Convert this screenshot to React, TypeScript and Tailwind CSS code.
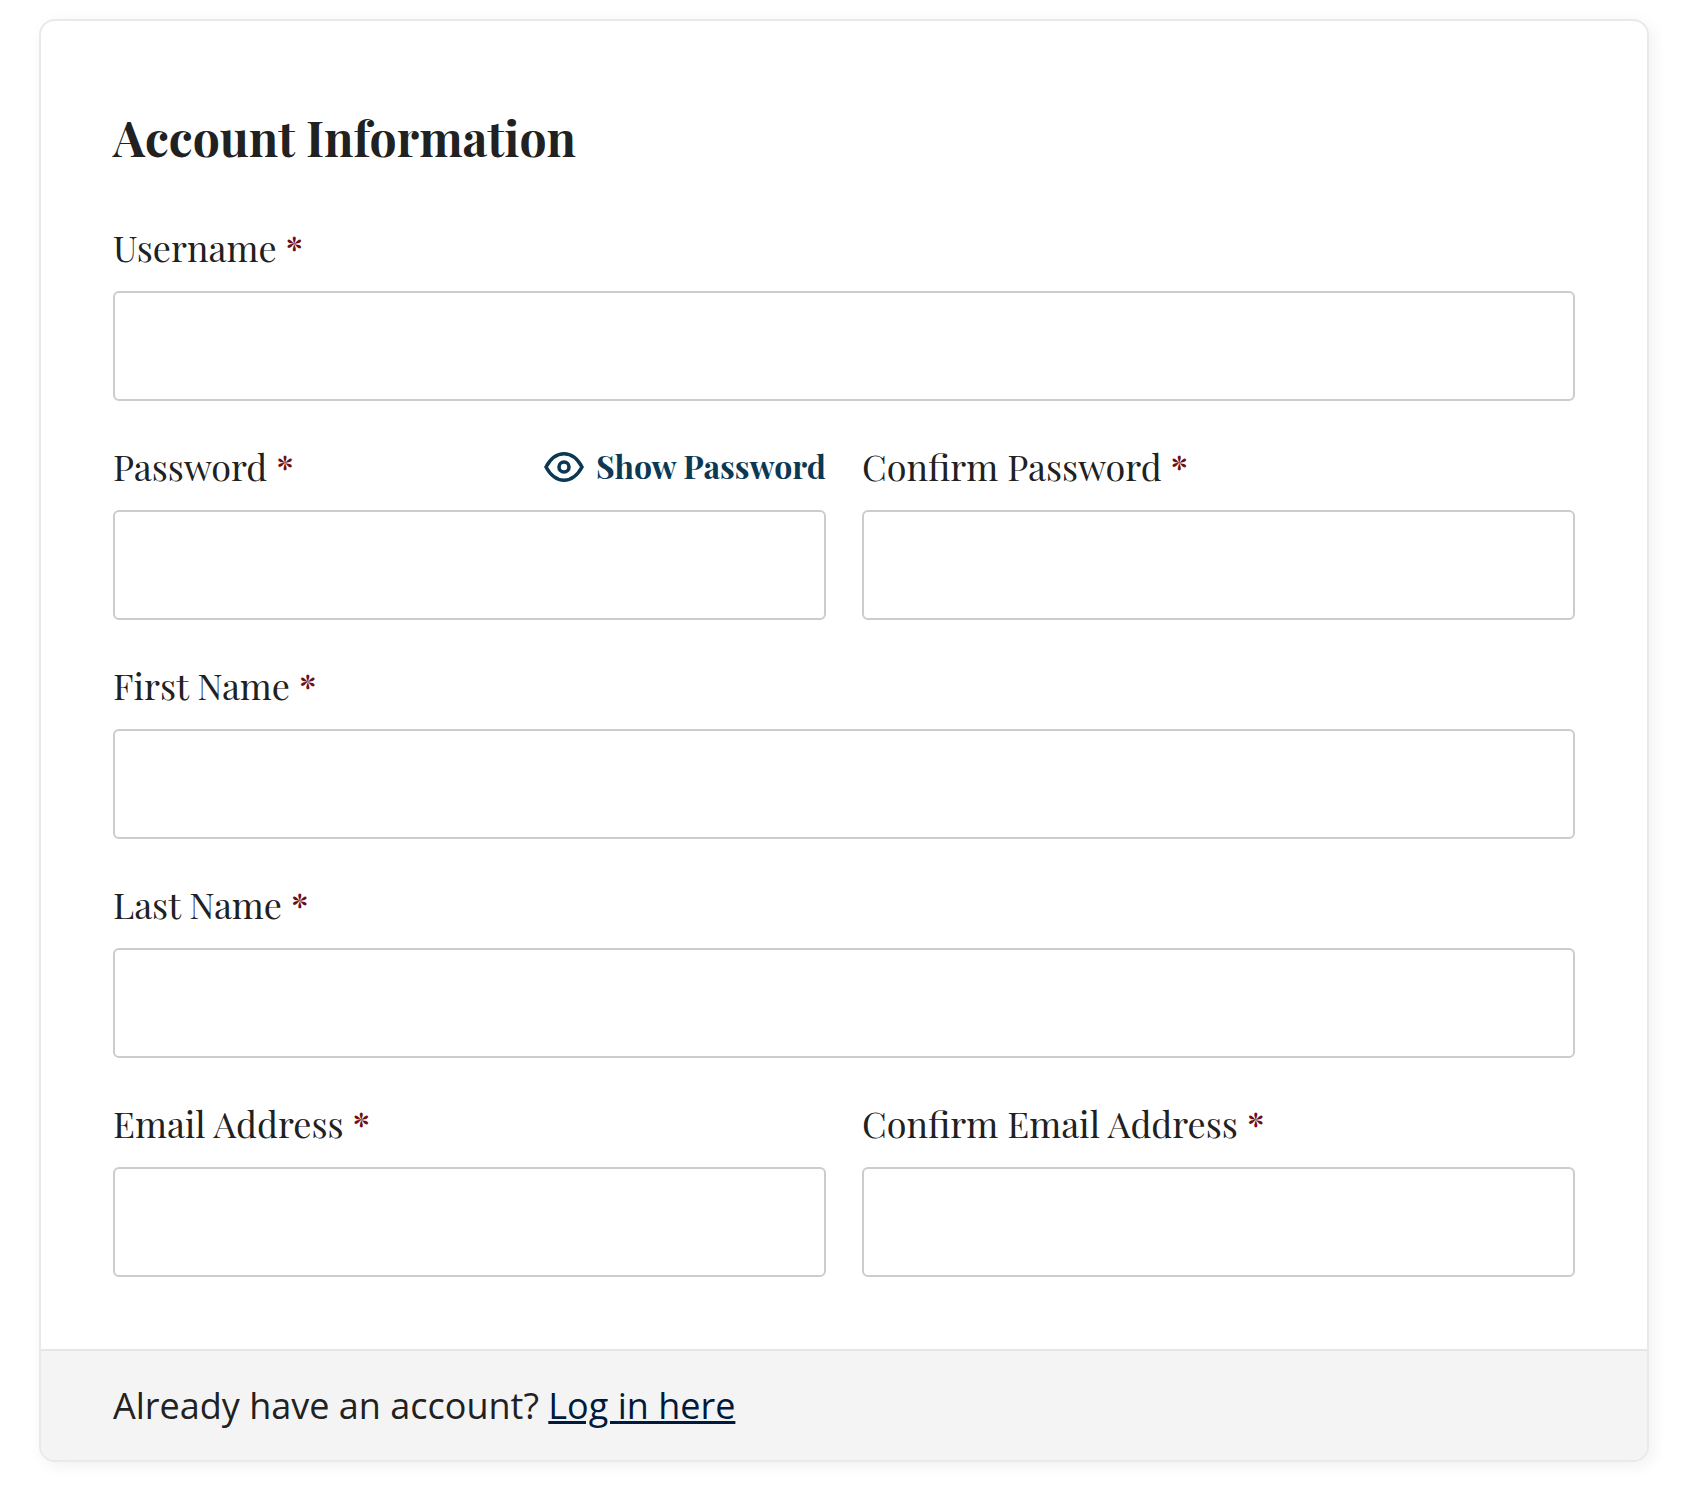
import { useState } from 'react';
import type { ReactNode } from 'react';

interface FieldProps {
  id: string;
  label: string;
  type?: string;
  action?: ReactNode;
}

function EyeIcon() {
  return (
    <svg
      className="h-9 w-10 shrink-0"
      viewBox="0 0 40 36"
      fill="none"
      stroke="currentColor"
      strokeWidth="3.6"
      strokeLinejoin="round"
      aria-hidden="true"
    >
      <path d="M2 19C5 13.500 11 5.800 20 5.800S35 13.500 38 19C35 24.500 29 32.200 20 32.200S5 24.500 2 19Z" />
      <circle cx="20" cy="19" r="5" />
    </svg>
  );
}

function Field({ id, label, type = 'text', action }: FieldProps) {
  return (
    <div className="min-w-0 flex-1">
      <div className="mb-[22px] flex items-center justify-between">
        <label htmlFor={id} className="text-4xl leading-[44px]">
          {label} <span className="font-medium text-[#700d14]">*</span>
        </label>
        {action}
      </div>
      <input
        id={id}
        name={id}
        type={type}
        required
        className="block h-[110px] w-full rounded-md border-2 border-[#cccccc] bg-white px-6 text-4xl shadow-none outline-none focus:border-[#0b3954]"
      />
    </div>
  );
}

export default function App() {
  const [showPassword, setShowPassword] = useState(false);
  const passwordType = showPassword ? 'text' : 'password';

  return (
    <main className="bg-white pt-[19px] pr-[55px] pb-11 pl-[39px] font-['Playfair_Display','Liberation_Serif',serif] text-[#212121]">
      <form className="overflow-hidden rounded-2xl border-2 border-[#e9e9e9] bg-white shadow-[4px_4px_16px_rgba(0,0,0,0.06)]">
        <div className="px-[72px] pt-[84px] pb-[72px]">
          <h2 className="mb-14 text-5xl leading-[64px] font-bold">Account Information</h2>

          <div className="flex flex-col gap-[43px]">
            <Field id="username" label="Username" />

            {/* Password */}
            <div className="flex gap-9">
              <Field
                id="password"
                label="Password"
                type={passwordType}
                action={
                  <button
                    type="button"
                    onClick={() => setShowPassword(!showPassword)}
                    className="flex items-center gap-3 text-[32px] leading-[44px] font-bold text-[#0b3954]"
                  >
                    <EyeIcon />
                    {showPassword ? 'Hide Password' : 'Show Password'}
                  </button>
                }
              />
              <Field id="confirm-password" label="Confirm Password" type={passwordType} />
            </div>

            <Field id="first-name" label="First Name" />
            <Field id="last-name" label="Last Name" />

            {/* Email */}
            <div className="flex gap-9">
              <Field id="email" label="Email Address" type="email" />
              <Field id="confirm-email" label="Confirm Email Address" type="email" />
            </div>
          </div>
        </div>

        {/* Footer */}
        <div className="border-t-2 border-[#e6e6e6] bg-[#f4f4f4] px-[72px] py-7 font-['Open_Sans',sans-serif] text-4xl leading-[53px]">
          Already have an account?{' '}
          <a href="#login" className="text-[#001a3d] underline decoration-3">
            Log in here
          </a>
        </div>
      </form>
    </main>
  );
}
